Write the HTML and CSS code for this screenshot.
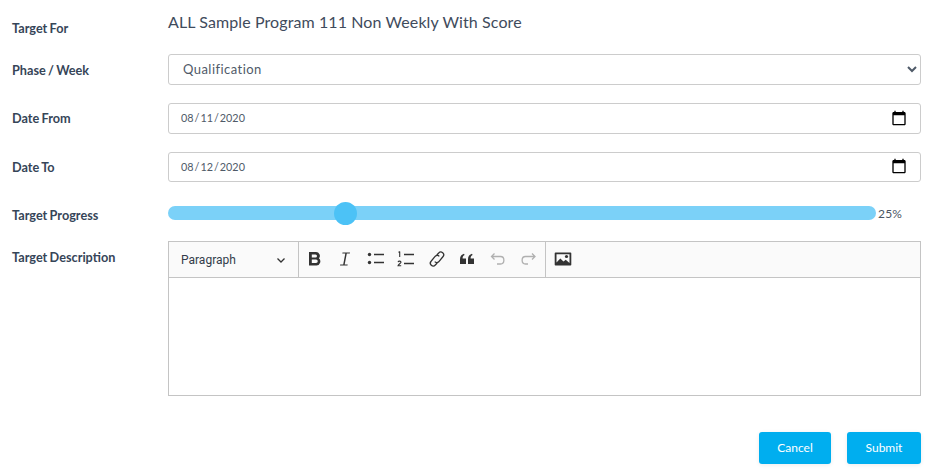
FILE: index.html
```html
<!DOCTYPE html>
<html lang="en">
<head>
<meta charset="utf-8">
<title>Target</title>
<link rel="stylesheet" href="styles.css">
</head>
<body>
<form class="form">
  <div class="row row-title">
    <label class="label">Target For</label>
    <div class="title">ALL Sample Program 111 Non Weekly With Score</div>
  </div>
  <div class="row row-phase">
    <label class="label">Phase / Week</label>
    <select class="control select"><option>Qualification</option></select>
  </div>
  <div class="row row-date">
    <label class="label">Date From</label>
    <input class="control date" type="date" value="2020-08-11">
  </div>
  <div class="row row-date">
    <label class="label">Date To</label>
    <input class="control date" type="date" value="2020-08-12">
  </div>
  <div class="row row-progress">
    <label class="label">Target Progress</label>
    <div class="progress">
      <div class="track"><span class="thumb"></span></div>
      <span class="pct">25%</span>
    </div>
  </div>
  <div class="row row-editor">
    <label class="label">Target Description</label>
    <div class="editor">
      <div class="toolbar">
        <div class="tb-group para">
          <span>Paragraph</span>
          <svg class="icon-sm" viewBox="0 0 10 10" width="10" height="10"><path d="M1.500 3.500l3.500 3.500 3.500-3.500" fill="none" stroke="#333" stroke-width="1.300"/></svg>
        </div>
        <div class="tb-group tools">
          <svg width="20" height="20" viewBox="0 0 20 20"><path d="M4 3h7a3.800 3.800 0 0 1 2.900 6.300A4.100 4.100 0 0 1 11.500 16.500H4zM6.800 5.500v3h3.700a1.500 1.500 0 0 0 0-3zM6.800 10.600v3.500h4.200a1.750 1.750 0 0 0 0-3.500z" fill="#333" fill-rule="evenodd"/></svg>
          <svg width="20" height="20" viewBox="0 0 20 20"><path d="M7.500 3.500h7.500l-.2 1h-3L9.700 15.500h3l-.2 1H5l.2-1h3L10.300 4.500h-3z" fill="#333"/></svg>
          <svg width="20" height="20" viewBox="0 0 20 20"><circle cx="3.500" cy="5.500" r="1.700" fill="#333"/><circle cx="3.500" cy="13.500" r="1.700" fill="#333"/><path d="M8 5.500h10M8 13.500h10" stroke="#333" stroke-width="1.500"/></svg>
          <svg width="20" height="20" viewBox="0 0 20 20"><path d="M8 5.500h10M8 14.500h10" stroke="#333" stroke-width="1.500"/><path d="M3.700 2.500v5.500M2.600 3.500l1.100-1M2 13.200c.5-1.500 3-1.300 3 .1 0 1-2.700 2-3 3.500h3.200" fill="none" stroke="#333" stroke-width="1.100"/></svg>
          <svg width="20" height="20" viewBox="0 0 20 20"><g fill="none" stroke="#333" stroke-width="1.300"><path d="M9.800 6l1.900-2a2.800 2.800 0 0 1 4.200 3.800l-4.200 5a2.800 2.800 0 0 1-4-.2"/><path d="M10.200 14l-1.900 2a2.800 2.800 0 0 1-4.200-3.800l4.200-5a2.800 2.800 0 0 1 4 .2"/></g></svg>
          <svg width="20" height="20" viewBox="0 0 20 20"><path d="M3 15V10.500c0-3.500 1.500-5 4-5.800l.6 1.200C6.300 6.600 5.600 7.500 5.600 9.600H9V15zM11 15V10.500c0-3.500 1.500-5 4-5.800l.6 1.200c-1.300.7-2 1.600-2 3.700H17V15z" fill="#333"/></svg>
          <svg width="20" height="20" viewBox="0 0 20 20"><path d="M7.500 4.500l-3 3 3 3M5 7.500h8.500c4.500 0 4.500 7.500 0 7.500H10" fill="none" stroke="#b0b0b0" stroke-width="1.300"/></svg>
          <svg width="20" height="20" viewBox="0 0 20 20"><path d="M14 4.500l3 3-3 3M16.500 7.500h-9c-4.500 0-4.500 7.500 0 7.500H10" fill="none" stroke="#b0b0b0" stroke-width="1.300"/></svg>
        </div>
        <div class="tb-group media">
          <svg width="20" height="20" viewBox="0 0 20 20"><path fill-rule="evenodd" d="M2.500 3.500h15a.8.8 0 0 1 .8.8v11.400a.8.8 0 0 1-.8.8h-15a.8.8 0 0 1-.8-.8V4.300a.8.8 0 0 1 .8-.8zM3.500 5.200v8.300l3.800-4 3.200 3 2.200-1.700 3.800 3.200V5.200z" fill="#333"/><circle cx="13.500" cy="7.500" r="1.600" fill="#333"/></svg>
        </div>
      </div>
      <div class="editable"></div>
    </div>
  </div>
  <div class="actions">
    <button type="button" class="btn btn-cancel">Cancel</button>
    <button type="button" class="btn btn-submit">Submit</button>
  </div>
</form>
</body>
</html>
```
FILE: styles.css
```css
* { box-sizing: border-box; }
html, body { margin: 0; padding: 0; background: #fff; }
body { font-family: Lato, "Noto Sans", sans-serif; color: #3a4759; width: 925px; height: 474px; overflow: hidden; }
.form { padding: 0 4px 0 12px; }
.row { display: grid; grid-template-columns: 156px 753px; }
.label { font-size: 12.700px; font-weight: 700; color: #364558; line-height: 16px; word-spacing: -0.8px; }
.row-title { height: 54px; padding-top: 12px; }
.row-title .label { padding-top: 8px; }
.title { font-size: 16px; line-height: 20px; color: #3f4b5c; letter-spacing: 0.1px; }
.row-phase { height: 49px; }
.row-phase .label { padding-top: 8px; }
.row-date { height: 48.500px; }
.row-date .label { padding-top: 7px; }
.control { width: 753px; height: 30.500px; border: 1px solid #cccccc; border-radius: 3px; background: #fff; color: #4f5a68; font-family: Lato, sans-serif; outline: none; }
.select { font-size: 13px; padding: 0 0 0 10px; letter-spacing: 0.45px; }
.date { font-size: 10.800px; padding: 0 13px 1px 11px; letter-spacing: 0; }
.date::-webkit-calendar-picker-indicator { width: 16px; height: 16px; margin: 0; padding: 0; background-size: 100% 100%; }
.row-progress { height: 41px; padding-top: 5px; }
.row-progress .label { padding-top: 2px; }
.progress { display: flex; align-items: center; height: 16px; }
.track { position: relative; width: 708px; height: 14px; background: #7bd1f8; border-radius: 7px; }
.thumb { position: absolute; left: 166px; top: -4px; width: 23px; height: 23px; border-radius: 50%; background: #4cc2f6; }
.pct { margin-left: 2px; font-size: 12px; color: #4a5563; letter-spacing: 0.2px; }
.row-editor .label { padding-top: 8px; }
.editor { height: 155px; border: 1px solid #c4c4c4; display: flex; flex-direction: column; }
.toolbar { height: 36px; display: flex; background: #fafafa; border-bottom: 1px solid #c4c4c4; flex: none; }
.tb-group { display: flex; align-items: center; height: 100%; }
.para { width: 130px; border-right: 1px solid #c4c4c4; padding: 0 12px; justify-content: space-between; font-family: Roboto, "Liberation Sans", sans-serif; font-size: 12px; color: #333c4a; }
.tools { gap: 10.400px; padding: 0 7px 1px 6px; border-right: 1px solid #c4c4c4; }
.media { padding: 0 7px 1px; }
.editable { flex: 1; background: #fff; }
.actions { display: flex; justify-content: flex-end; gap: 16px; margin-top: 36px; padding-right: 0; }
.btn { height: 32px; border: 0; border-radius: 3px; padding: 0 0 2px; background: #00aeef; color: #fff; font-family: Lato, sans-serif; font-size: 12px; box-shadow: 0 1px 4px rgba(0,0,0,.08); }
.btn-cancel { width: 72px; }
.btn-submit { width: 74px; }
```
